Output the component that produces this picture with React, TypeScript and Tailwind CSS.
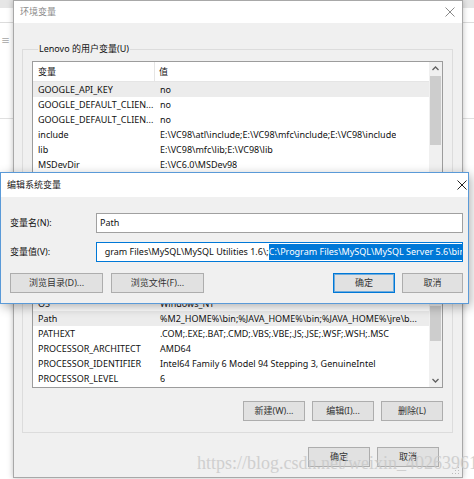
const upperRows = [
  ["GOOGLE_API_KEY", "no"],
  ["GOOGLE_DEFAULT_CLIEN...", "no"],
  ["GOOGLE_DEFAULT_CLIEN...", "no"],
  ["include", "E:\\VC98\\atl\\include;E:\\VC98\\mfc\\include;E:\\VC98\\include"],
  ["lib", "E:\\VC98\\mfc\\lib;E:\\VC98\\lib"],
  ["MSDevDir", "E:\\VC6.0\\MSDev98"],
  ["OneDrive", "C:\\Users\\Lenovo\\OneDrive"],
  ["Path", "C:\\Users\\Lenovo\\AppData\\Local\\Microsoft\\WindowsApps;"],
];

const lowerRows = [
  ["M2_HOME", "D:\\apache-maven-3.5.0"],
  ["NUMBER_OF_PROCESSORS", "4"],
  ["OS", "Windows_NT"],
  ["Path", "%M2_HOME%\\bin;%JAVA_HOME%\\bin;%JAVA_HOME%\\jre\\b..."],
  ["PATHEXT", ".COM;.EXE;.BAT;.CMD;.VBS;.VBE;.JS;.JSE;.WSF;.WSH;.MSC"],
  ["PROCESSOR_ARCHITECT", "AMD64"],
  ["PROCESSOR_IDENTIFIER", "Intel64 Family 6 Model 94 Stepping 3, GenuineIntel"],
  ["PROCESSOR_LEVEL", "6"],
];

function CloseX({ color }: { color: string }) {
  return (
    <svg width="10" height="10" viewBox="0 0 10 10">
      <path d="M0.5 0.5L9.5 9.5M9.5 0.5L0.5 9.5" stroke={color} strokeWidth="1" />
    </svg>
  );
}

function Chevron({ up }: { up?: boolean }) {
  return (
    <svg width="7" height="5" viewBox="0 0 7 5">
      <path d={up ? "M0.5 4L3.5 1L6.5 4" : "M0.5 1L3.5 4L6.5 1"} stroke="#606060" strokeWidth="1.3" fill="none" />
    </svg>
  );
}

function Grip() {
  return (
    <svg width="8" height="8" viewBox="0 0 8 8" className="opacity-60">
      <rect x="6" y="0" width="1" height="1" fill="#999" />
      <rect x="3" y="3" width="1" height="1" fill="#999" />
      <rect x="6" y="3" width="1" height="1" fill="#999" />
      <rect x="0" y="6" width="1" height="1" fill="#999" />
      <rect x="3" y="6" width="1" height="1" fill="#999" />
      <rect x="6" y="6" width="1" height="1" fill="#999" />
    </svg>
  );
}

function Btn({ label }: { label: string }) {
  return (
    <div className="flex h-[20px] w-[62px] items-center justify-center border border-[#adadad] bg-[#e1e1e1] text-[#333]">
      {label}
    </div>
  );
}

function Row({ name, value, hl }: { name: string; value: string; hl?: boolean }) {
  return (
    <div className={hl ? "flex h-[15px] items-center bg-[#ececec]" : "flex h-[15px] items-center"}>
      <div className="w-[122px] shrink-0 overflow-hidden whitespace-nowrap pl-[5px]">{name}</div>
      <div className="overflow-hidden whitespace-nowrap pl-[5px]">{value}</div>
    </div>
  );
}

export default function App() {
  return (
    <div className="relative h-[479px] w-[474px] overflow-hidden bg-white font-['Noto_Sans','Noto_Sans_CJK_SC',sans-serif] text-[9px] leading-[12px] text-[#111]">
      {/* window behind */}
      <div className="flex flex-col">
        <div className="h-[8px] bg-[#e6e6e6]" />
        <div className="h-[15px] border-b border-[#dcdcdc]" />
        <div className="flex h-[96px] items-start border-b border-[#e0e0e0] pt-[12px] text-[#777]">
          <span className="pl-[1px]">≡</span>
        </div>
      </div>

      {/* 环境变量 */}
      <div className="absolute left-[13px] top-0 flex h-[478px] w-[450px] flex-col border border-[#a8a8a8] bg-[#f0f0f0] shadow-[0_0_6px_rgba(0,0,0,0.25)]">
        <div className="flex h-[22px] shrink-0 items-center justify-between bg-white pl-[6px] pr-[7px] text-[#8a8a8a]">
          <span>环境变量</span>
          <CloseX color="#8a8a8a" />
        </div>

        <div className="flex flex-1 flex-col pt-[20px]">
          <fieldset className="ml-[8px] mr-[9px] h-[182px] border border-[#dcdcdc] pl-[9px] pr-[9px]">
            <legend className="ml-[6px] px-[1px]">Lenovo 的用户变量(U)</legend>
            <div className="mt-[6px] flex h-[130px] border border-[#9c9c9c] bg-white">
              <div className="flex-1 overflow-hidden">
                <div className="flex h-[20px] items-center border-b border-[#e5e5e5]">
                  <div className="h-full w-[122px] shrink-0 border-r border-[#e5e5e5] pl-[5px] leading-[20px]">变量</div>
                  <div className="pl-[4px]">值</div>
                </div>
                {upperRows.map(([n, v], i) => (
                  <Row key={i} name={n} value={v} hl={i === 0} />
                ))}
              </div>
              <div className="flex w-[13px] flex-col bg-[#f0f0f0]">
                <div className="flex h-[13px] items-center justify-center">
                  <Chevron up />
                </div>
                <div className="flex-1 px-[1px]">
                  <div className="mt-[1px] h-[69px] bg-[#cdcdcd]" />
                </div>
              </div>
            </div>
          </fieldset>

          <fieldset className="ml-[8px] mr-[9px] mt-[2px] border border-[#dcdcdc] pb-[11px] pl-[9px] pr-[9px]">
            <legend className="ml-[6px] px-[1px]">系统变量(S)</legend>
            <div className="mt-[6px] flex h-[143px] border border-[#9c9c9c] bg-white">
              <div className="flex-1 overflow-hidden">
                <div className="flex h-[20px] items-center border-b border-[#e5e5e5]">
                  <div className="h-full w-[122px] shrink-0 border-r border-[#e5e5e5] pl-[5px] leading-[20px]">变量</div>
                  <div className="pl-[4px]">值</div>
                </div>
                {lowerRows.map(([n, v], i) => (
                  <Row key={i} name={n} value={v} hl={i === 3} />
                ))}
              </div>
              <div className="flex w-[13px] flex-col bg-[#f0f0f0]">
                <div className="flex h-[13px] items-center justify-center">
                  <Chevron up />
                </div>
                <div className="flex-1 px-[1px]">
                  <div className="mt-[47px] h-[35px] bg-[#cdcdcd]" />
                </div>
                <div className="flex h-[13px] items-center justify-center">
                  <Chevron />
                </div>
              </div>
            </div>
            <div className="mt-[13px] flex justify-end gap-[7px]">
              <Btn label="新建(W)..." />
              <Btn label="编辑(I)..." />
              <Btn label="删除(L)" />
            </div>
          </fieldset>

          <div className="mt-[14px] flex justify-end gap-[7px] pr-[23px]">
            <Btn label="确定" />
            <Btn label="取消" />
          </div>
        </div>
        <div className="flex justify-end pb-[2px] pr-[2px]">
          <Grip />
        </div>
      </div>

      {/* 编辑系统变量 */}
      <div className="absolute left-0 top-[172px] flex h-[132px] w-[469px] flex-col border border-[#5a9ad8] bg-[#f0f0f0] shadow-[2px_3px_10px_rgba(0,0,0,0.3)]">
        <div className="flex h-[24px] shrink-0 items-center justify-between bg-white pl-[6px] pr-[1px] text-[#222]">
          <span>编辑系统变量</span>
          <CloseX color="#222" />
        </div>
        <div className="flex flex-col pl-[9px] pr-[5px] pt-[16px]">
          <div className="flex items-center">
            <div className="w-[86px] shrink-0">变量名(N):</div>
            <div className="flex h-[20px] flex-1 items-center border border-[#a0a0a0] bg-white pl-[3px]">Path</div>
          </div>
          <div className="mt-[9px] flex items-center">
            <div className="w-[86px] shrink-0">变量值(V):</div>
            <div className="flex h-[20px] flex-1 items-center justify-end overflow-hidden whitespace-nowrap border border-[#0078d7] bg-white">
              <span className="mr-[-3px] shrink-0 leading-[16px]">
                gram Files\MySQL\MySQL Utilities 1.6\;
                <span className="inline-block bg-[#0078d7] text-white">C:\Program Files\MySQL\MySQL Server 5.6\bin</span>
              </span>
            </div>
          </div>
          <div className="mt-[11px] flex items-center">
            <div className="flex h-[20px] w-[93px] items-center justify-center border border-[#adadad] bg-[#e1e1e1] text-[#333]">浏览目录(D)...</div>
            <div className="ml-[8px] flex h-[20px] w-[93px] items-center justify-center border border-[#adadad] bg-[#e1e1e1] text-[#333]">浏览文件(F)...</div>
            <div className="ml-auto flex gap-[7px]">
              <div className="flex h-[20px] w-[62px] items-center justify-center border border-[#0078d7] bg-[#e1e1e1] text-[#333] shadow-[inset_0_0_0_1px_rgba(0,120,215,0.5)]">确定</div>
              <div className="flex h-[20px] w-[61px] items-center justify-center border border-[#adadad] bg-[#e1e1e1] text-[#333]">取消</div>
            </div>
          </div>
        </div>
      </div>

      {/* watermark */}
      <div className="pointer-events-none absolute left-[197px] top-[452px] whitespace-nowrap font-['Liberation_Serif',serif] text-[18px] leading-[22px] text-[#c8c8c8] opacity-80">
        https://blog.csdn.net/weixin_40263961
      </div>
    </div>
  );
}
